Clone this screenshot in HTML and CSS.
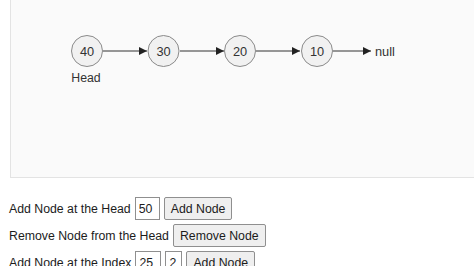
FILE: index.html
```html
<!DOCTYPE html>
<html>
<head>
<meta charset="utf-8">
<title>Linked List</title>
<link rel="stylesheet" href="styles.css">
</head>
<body>
<div class="stage">
  <svg class="diagram" width="480" height="217" viewBox="11 -40 480 217" xmlns="http://www.w3.org/2000/svg">
    <defs>
      <marker id="arrow" viewBox="0 0 10 10" refX="10" refY="5" markerWidth="8" markerHeight="8" markerUnits="userSpaceOnUse" orient="auto">
        <path d="M0,0 L10,5 L0,10 Z" fill="#222"/>
      </marker>
    </defs>
    <g class="links">
      <line x1="103" y1="50" x2="147" y2="50" marker-end="url(#arrow)"/>
      <line x1="180" y1="50" x2="224" y2="50" marker-end="url(#arrow)"/>
      <line x1="256" y1="50" x2="300" y2="50" marker-end="url(#arrow)"/>
      <line x1="333" y1="50" x2="371" y2="50" marker-end="url(#arrow)"/>
    </g>
    <g class="nodes">
      <circle cx="87" cy="50" r="15.5"/>
      <circle cx="163.5" cy="50" r="15.5"/>
      <circle cx="240" cy="50" r="15.5"/>
      <circle cx="317" cy="50" r="15.5"/>
    </g>
    <g class="labels">
      <text x="87" y="54.5" text-anchor="middle">40</text>
      <text x="163.5" y="54.5" text-anchor="middle">30</text>
      <text x="240" y="54.5" text-anchor="middle">20</text>
      <text x="317" y="54.5" text-anchor="middle">10</text>
      <text x="375" y="54.5">null</text>
      <text x="86" y="81" text-anchor="middle" class="head">Head</text>
    </g>
  </svg>
</div>
<div class="controls">
  <div class="row">
    <span>Add Node at the Head</span>
    <input class="num w25" type="text" value="50">
    <button>Add Node</button>
  </div>
  <div class="row">
    <span>Remove Node from the Head</span>
    <button>Remove Node</button>
  </div>
  <div class="row">
    <span>Add Node at the Index</span>
    <input class="num w26" type="text" value="25">
    <input class="num w17" type="text" value="2">
    <button>Add Node</button>
  </div>
</div>
</body>
</html>
```

FILE: styles.css
```css
html {
  overflow: hidden;
}
body {
  margin: 0;
  background: #ffffff;
  font-family: "Liberation Sans", Arial, Helvetica, sans-serif;
  font-size: 12.3px;
  color: #1c1c1c;
}
.stage {
  margin-top: -40px;
  margin-left: 10px;
  width: 520px;
  height: 218px;
  box-sizing: border-box;
  border: 1px solid #e3e3e3;
  background: #fafafa;
}
.diagram {
  display: block;
}
.links line {
  stroke: #333333;
  stroke-width: 1;
}
.nodes circle {
  fill: #f1f1f1;
  stroke: #8a8a8a;
  stroke-width: 1;
}
.labels text {
  font-family: "Liberation Sans", Arial, Helvetica, sans-serif;
  font-size: 12.8px;
  fill: #333333;
}
.labels .head {
  font-size: 12.3px;
}
.controls {
  margin-top: 19px;
  padding-left: 9px;
  display: flex;
  flex-direction: column;
  gap: 4px;
}
.row {
  display: flex;
  align-items: center;
  height: 23px;
  gap: 4px;
}
.num {
  box-sizing: border-box;
  height: 23px;
  margin: 0;
  padding: 0 3px;
  border: 1px solid #8f8f8f;
  border-radius: 0;
  background: #ffffff;
  font-family: "Liberation Sans", Arial, Helvetica, sans-serif;
  font-size: 12.3px;
  color: #1c1c1c;
}
.w25 { width: 25px; }
.w26 { width: 26px; }
.w17 { width: 17px; }
button {
  box-sizing: border-box;
  height: 23px;
  margin: 0;
  padding: 0 6px;
  border: 1px solid #8f8f8f;
  border-radius: 2px;
  background: #efefef;
  font-family: "Liberation Sans", Arial, Helvetica, sans-serif;
  font-size: 12.3px;
  color: #1c1c1c;
}
```
